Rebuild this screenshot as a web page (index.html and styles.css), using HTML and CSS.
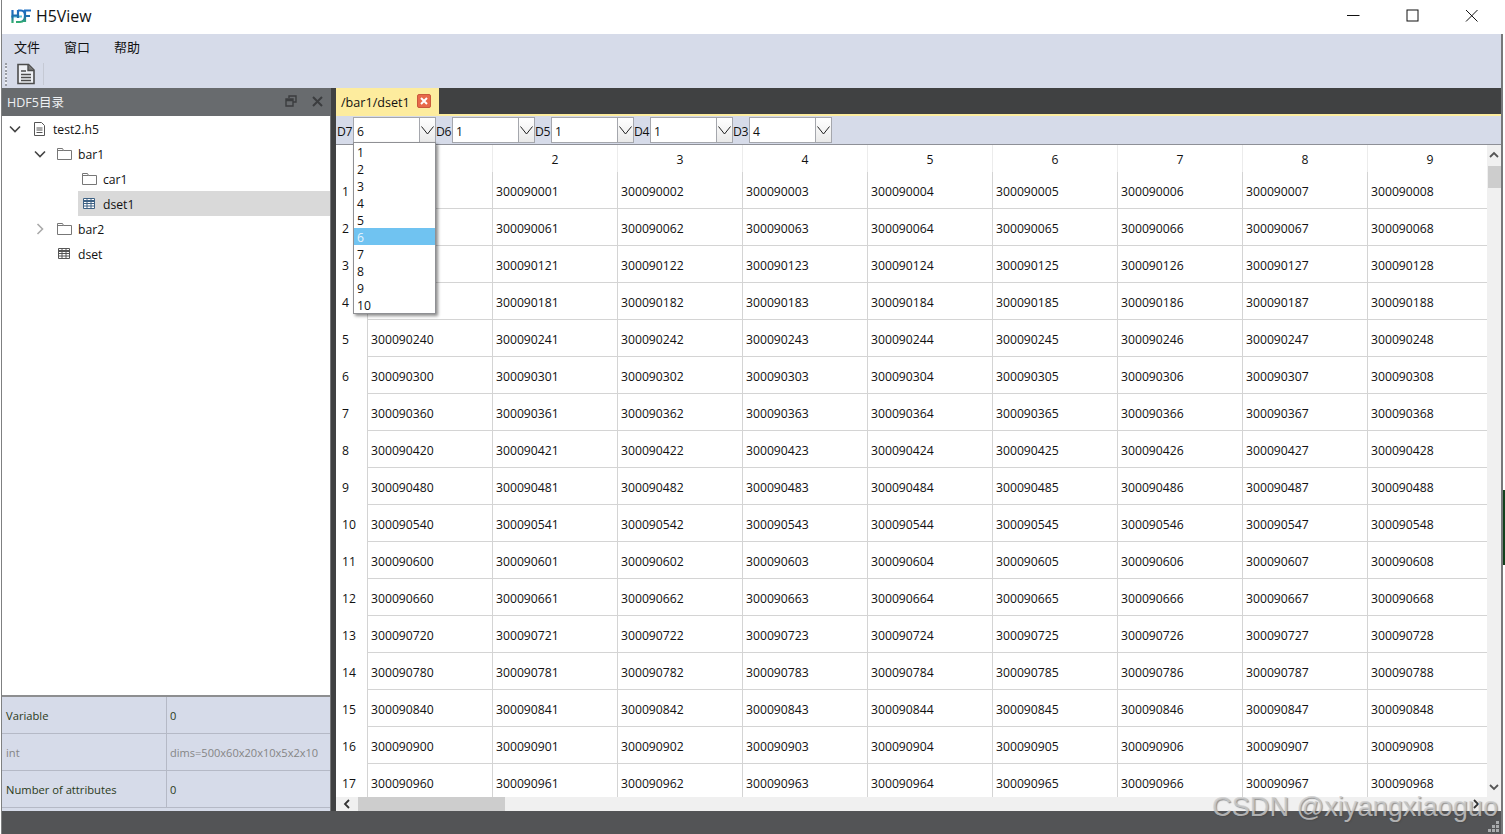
FILE: index.html
```html
<!DOCTYPE html>
<html lang="zh">
<head>
<meta charset="utf-8">
<title>H5View</title>
<link rel="stylesheet" href="styles.css">
</head>
<body>
<div class="edge-left"></div>
<div class="window">
  <header class="titlebar">
    <svg class="logo" width="21" height="15" viewBox="0 0 21 15">
      <defs><linearGradient id="logoFill" x1="0" y1="0" x2="0" y2="1"><stop offset="0" stop-color="#1c6fc4"/><stop offset=".55" stop-color="#1f6fa8"/><stop offset="1" stop-color="#35b56a"/></linearGradient></defs>
      <path d="M1 7.500h11" stroke="#57c3d8" stroke-width="2" fill="none"/>
      <path d="M2.500 1v13M8 1v8M2.500 6.500H8M8 1.500h3c3 0 4 2 4 5s-1 6.500-5 6.500H6M14 1.500h7M15 1.500V13M15 7h5" fill="none" stroke="url(#logoFill)" stroke-width="2.200"/>
    </svg>
    <span class="app-name">H5View</span>
    <div class="win-controls">
      <svg class="win-btn" width="13" height="13" viewBox="0 0 13 13"><path d="M0 6.500h12.500" stroke="#111" fill="none"/></svg>
      <svg class="win-btn" width="13" height="13" viewBox="0 0 13 13"><rect x="1" y="1" width="11" height="11" stroke="#111" fill="none"/></svg>
      <svg class="win-btn" width="13" height="13" viewBox="0 0 13 13"><path d="M1 1l11.500 11.500M12.500 1L1 12.500" stroke="#111" fill="none"/></svg>
    </div>
  </header>
  <nav class="menubar">
    <span class="menu-item">文件</span>
    <span class="menu-item">窗口</span>
    <span class="menu-item">帮助</span>
  </nav>
  <div class="toolbar">
    <span class="grip"></span>
    <svg class="tool-icon" width="20" height="22" viewBox="0 0 20 22">
      <path d="M2 1.500h10.500l5.500 5.500v13.500H2z" fill="#eef0f5" stroke="#4d4d4d" stroke-width="1.600"/>
      <path d="M12 1.500v6h6" fill="#777" stroke="#4d4d4d" stroke-width="1.400"/>
      <path d="M5 8h5M5 11.500h10M5 14.500h10M5 17.500h10" stroke="#4d4d4d" stroke-width="1.500" fill="none"/>
    </svg>
    <span class="tool-sep"></span>
  </div>
  <main class="workspace">
    <aside class="dock">
      <div class="dock-title">
        <span class="dock-name">HDF5目录</span>
        <svg class="dock-btn" width="12" height="12" viewBox="0 0 12 12"><path d="M4 3V1h7v6H8.500M1 4h7v7H1zM1 5.500h7" fill="none" stroke="#3b3d3f" stroke-width="1.400"/></svg>
        <svg class="dock-btn dock-close" width="11" height="11" viewBox="0 0 11 11"><path d="M1 1l9 9M10 1l-9 9" fill="none" stroke="#3b3d3f" stroke-width="2"/></svg>
      </div>
      <ul class="tree">
        <li class="tree-row level-0">
          <svg class="chev" width="12" height="12" viewBox="0 0 12 12"><path d="M1 3.500l5 5 5-5" fill="none" stroke="#444" stroke-width="1.600"/></svg>
          <svg class="node-icon" width="14" height="14" viewBox="0 0 14 14"><path d="M2 .5h7l3 3v10H2z" fill="#fff" stroke="#555"/><path d="M4 6h6M4 8h6M4 10.500h6" stroke="#555" fill="none"/></svg>
          <span class="node-label">test2.h5</span>
        </li>
        <li class="tree-row level-1">
          <svg class="chev" width="12" height="12" viewBox="0 0 12 12"><path d="M1 3.500l5 5 5-5" fill="none" stroke="#444" stroke-width="1.600"/></svg>
          <svg class="node-icon" width="15" height="14" viewBox="0 0 15 14"><path d="M.5 1.500h5l1 2h8v9H.500zM.5 3.500h6" fill="#fff" stroke="#777"/></svg>
          <span class="node-label">bar1</span>
        </li>
        <li class="tree-row level-2">
          <span class="chev-space"></span>
          <svg class="node-icon" width="15" height="14" viewBox="0 0 15 14"><path d="M.5 1.500h5l1 2h8v9H.500zM.5 3.500h6" fill="#fff" stroke="#777"/></svg>
          <span class="node-label">car1</span>
        </li>
        <li class="tree-row level-2 selected">
          <span class="chev-space"></span>
          <svg class="node-icon" width="13" height="11" viewBox="0 0 13 11"><path d="M.5.500h11v10H.500z" fill="#fff" stroke="#3e6285"/><path d="M.5 3h11" stroke="#3e6285" stroke-width="2"/><path d="M.5 5.500h11M.5 8h11M4 .5v10M8 .5v10" stroke="#3e6285" fill="none"/></svg>
          <span class="node-label">dset1</span>
        </li>
        <li class="tree-row level-1">
          <svg class="chev" width="12" height="12" viewBox="0 0 12 12"><path d="M3.500 1l5 5-5 5" fill="none" stroke="#aaa" stroke-width="1.600"/></svg>
          <svg class="node-icon" width="15" height="14" viewBox="0 0 15 14"><path d="M.5 1.500h5l1 2h8v9H.500zM.5 3.500h6" fill="#fff" stroke="#777"/></svg>
          <span class="node-label">bar2</span>
        </li>
        <li class="tree-row level-1">
          <span class="chev-space"></span>
          <svg class="node-icon" width="13" height="11" viewBox="0 0 13 11"><path d="M.5.500h11v10H.500z" fill="#fff" stroke="#555"/><path d="M.5 3h11" stroke="#555" stroke-width="2"/><path d="M.5 5.500h11M.5 8h11M4 .5v10M8 .5v10" stroke="#555" fill="none"/></svg>
          <span class="node-label">dset</span>
        </li>
      </ul>
      <div class="attrs-panel">
        <table class="attrs">
          <tr><td class="attr-key">Variable</td><td>0</td></tr>
          <tr class="muted"><td class="attr-key">int</td><td>dims=500x60x20x10x5x2x10</td></tr>
          <tr><td class="attr-key">Number of attributes</td><td>0</td></tr>
        </table>
      </div>
    </aside>
    <section class="content">
      <div class="tabbar">
        <div class="tab">
          <span class="tab-label">/bar1/dset1</span>
          <svg class="tab-close" width="14" height="14" viewBox="0 0 14 14"><rect x=".5" y=".5" width="13" height="13" rx="1.500" fill="#e8694a" stroke="#c9593c"/><path d="M4 4l6 6M10 4l-6 6" stroke="#fff" stroke-width="2" fill="none"/></svg>
        </div>
      </div>
      <div class="dims">
        <label class="dim">D7</label>
        <div class="combo open">
          <span class="combo-value">6</span>
          <span class="combo-arrow"><svg width="13" height="9" viewBox="0 0 13 9"><path d="M.5.500l6 7.500 6-7.500" fill="none" stroke="#222"/></svg></span>
          <ul class="popup">
            <li>1</li><li>2</li><li>3</li><li>4</li><li>5</li><li class="current">6</li><li>7</li><li>8</li><li>9</li><li>10</li>
          </ul>
        </div>
        <label class="dim">D6</label>
        <div class="combo"><span class="combo-value">1</span><span class="combo-arrow"><svg width="13" height="9" viewBox="0 0 13 9"><path d="M.5.500l6 7.500 6-7.500" fill="none" stroke="#222"/></svg></span></div>
        <label class="dim">D5</label>
        <div class="combo"><span class="combo-value">1</span><span class="combo-arrow"><svg width="13" height="9" viewBox="0 0 13 9"><path d="M.5.500l6 7.500 6-7.500" fill="none" stroke="#222"/></svg></span></div>
        <label class="dim">D4</label>
        <div class="combo"><span class="combo-value">1</span><span class="combo-arrow"><svg width="13" height="9" viewBox="0 0 13 9"><path d="M.5.500l6 7.500 6-7.500" fill="none" stroke="#222"/></svg></span></div>
        <label class="dim">D3</label>
        <div class="combo"><span class="combo-value">4</span><span class="combo-arrow"><svg width="13" height="9" viewBox="0 0 13 9"><path d="M.5.500l6 7.500 6-7.500" fill="none" stroke="#222"/></svg></span></div>
      </div>
      <div class="data-view">
        <div class="data-main">
          <div class="table-clip">
            <table class="grid">
              <thead><tr><th class="corner"></th><th>1</th><th>2</th><th>3</th><th>4</th><th>5</th><th>6</th><th>7</th><th>8</th><th>9</th></tr></thead>
              <tbody>
                <tr><th>1</th><td>300090000</td><td>300090001</td><td>300090002</td><td>300090003</td><td>300090004</td><td>300090005</td><td>300090006</td><td>300090007</td><td>300090008</td></tr>
                <tr><th>2</th><td>300090060</td><td>300090061</td><td>300090062</td><td>300090063</td><td>300090064</td><td>300090065</td><td>300090066</td><td>300090067</td><td>300090068</td></tr>
                <tr><th>3</th><td>300090120</td><td>300090121</td><td>300090122</td><td>300090123</td><td>300090124</td><td>300090125</td><td>300090126</td><td>300090127</td><td>300090128</td></tr>
                <tr><th>4</th><td>300090180</td><td>300090181</td><td>300090182</td><td>300090183</td><td>300090184</td><td>300090185</td><td>300090186</td><td>300090187</td><td>300090188</td></tr>
                <tr><th>5</th><td>300090240</td><td>300090241</td><td>300090242</td><td>300090243</td><td>300090244</td><td>300090245</td><td>300090246</td><td>300090247</td><td>300090248</td></tr>
                <tr><th>6</th><td>300090300</td><td>300090301</td><td>300090302</td><td>300090303</td><td>300090304</td><td>300090305</td><td>300090306</td><td>300090307</td><td>300090308</td></tr>
                <tr><th>7</th><td>300090360</td><td>300090361</td><td>300090362</td><td>300090363</td><td>300090364</td><td>300090365</td><td>300090366</td><td>300090367</td><td>300090368</td></tr>
                <tr><th>8</th><td>300090420</td><td>300090421</td><td>300090422</td><td>300090423</td><td>300090424</td><td>300090425</td><td>300090426</td><td>300090427</td><td>300090428</td></tr>
                <tr><th>9</th><td>300090480</td><td>300090481</td><td>300090482</td><td>300090483</td><td>300090484</td><td>300090485</td><td>300090486</td><td>300090487</td><td>300090488</td></tr>
                <tr><th>10</th><td>300090540</td><td>300090541</td><td>300090542</td><td>300090543</td><td>300090544</td><td>300090545</td><td>300090546</td><td>300090547</td><td>300090548</td></tr>
                <tr><th>11</th><td>300090600</td><td>300090601</td><td>300090602</td><td>300090603</td><td>300090604</td><td>300090605</td><td>300090606</td><td>300090607</td><td>300090608</td></tr>
                <tr><th>12</th><td>300090660</td><td>300090661</td><td>300090662</td><td>300090663</td><td>300090664</td><td>300090665</td><td>300090666</td><td>300090667</td><td>300090668</td></tr>
                <tr><th>13</th><td>300090720</td><td>300090721</td><td>300090722</td><td>300090723</td><td>300090724</td><td>300090725</td><td>300090726</td><td>300090727</td><td>300090728</td></tr>
                <tr><th>14</th><td>300090780</td><td>300090781</td><td>300090782</td><td>300090783</td><td>300090784</td><td>300090785</td><td>300090786</td><td>300090787</td><td>300090788</td></tr>
                <tr><th>15</th><td>300090840</td><td>300090841</td><td>300090842</td><td>300090843</td><td>300090844</td><td>300090845</td><td>300090846</td><td>300090847</td><td>300090848</td></tr>
                <tr><th>16</th><td>300090900</td><td>300090901</td><td>300090902</td><td>300090903</td><td>300090904</td><td>300090905</td><td>300090906</td><td>300090907</td><td>300090908</td></tr>
                <tr><th>17</th><td>300090960</td><td>300090961</td><td>300090962</td><td>300090963</td><td>300090964</td><td>300090965</td><td>300090966</td><td>300090967</td><td>300090968</td></tr>
              </tbody>
            </table>
          </div>
          <div class="hscroll">
            <svg class="scroll-arrow" width="8" height="10" viewBox="0 0 8 10"><path d="M6 1L2 5l4 4" fill="none" stroke="#333" stroke-width="1.800"/></svg>
            <span class="hthumb"></span>
            <svg class="scroll-arrow arrow-end" width="8" height="10" viewBox="0 0 8 10"><path d="M2 1l4 4-4 4" fill="none" stroke="#333" stroke-width="1.800"/></svg>
          </div>
        </div>
        <div class="vscroll">
          <svg class="vs-up" width="10" height="8" viewBox="0 0 10 8"><path d="M1 6l4-4 4 4" fill="none" stroke="#555" stroke-width="1.800"/></svg>
          <span class="vthumb"></span>
          <svg class="vs-down" width="10" height="8" viewBox="0 0 10 8"><path d="M1 2l4 4 4-4" fill="none" stroke="#555" stroke-width="1.800"/></svg>
        </div>
      </div>
    </section>
  </main>
  <footer class="statusbar">
    <svg class="size-grip" width="12" height="12" viewBox="0 0 12 12"><path d="M8 0h3v3H8zM4 4h3v3H4zM8 4h3v3H8zM0 8h3v3H0zM4 8h3v3H4zM8 8h3v3H8z" fill="#a9abad"/></svg>
  </footer>
</div>
<div class="edge-right"><span class="edge-patch"></span></div>
<div class="watermark">CSDN @xiyangxiaoguo</div>
</body>
</html>
```
FILE: styles.css
```css
* { box-sizing: border-box; }
html, body { margin: 0; height: 834px; overflow: hidden; }
body {
  display: flex;
  width: 1505px;
  position: relative;
  background: #fff;
  color: #111;
  font: 12.2px/1 "Open Sans", "Noto Sans CJK SC", sans-serif;
}
ul { list-style: none; margin: 0; padding: 0; }
table { border-collapse: separate; border-spacing: 0; }

.edge-left { width: 1px; background: #fff; flex: none; }
.edge-right { width: 2px; background: #fff; flex: none; padding-top: 490px; }
.edge-patch { display: block; height: 75px; background: #12401c; }

.window {
  width: 1502px;
  flex: none;
  display: flex;
  flex-direction: column;
  border-left: 1px solid #7f8081;
  border-right: 2px solid #77787a;
}

/* title */
.titlebar {
  height: 34px;
  flex: none;
  display: flex;
  align-items: center;
  background: #fff;
  padding: 0 0 3px 8px;
  margin-right: -2px;
}
.logo { margin: 1px 5px 0 0; }
.app-name { font: 15.9px "Open Sans", sans-serif; }
.win-controls { margin-left: auto; display: flex; padding-right: 25px; gap: 46px; }
.win-btn { display: block; }

/* menu + toolbar */
.menubar {
  height: 26px;
  flex: none;
  background: #d6dbe9;
  display: flex;
  align-items: center;
  padding: 0 0 2px 12px;
  gap: 24px;
}
.menu-item { font: 13px "Noto Sans CJK SC", sans-serif; width: 26px; white-space: nowrap; }
.toolbar {
  height: 28px;
  flex: none;
  background: #d6dbe9;
  display: flex;
  align-items: center;
  padding-left: 3px;
}
.grip {
  width: 2px;
  height: 23px;
  background: repeating-linear-gradient(to bottom, #9a9da5 0 2px, #eef0f5 2px 3.500px);
}
.tool-icon { margin-left: 9px; }
.tool-sep { width: 1px; height: 22px; background: #c5c9d4; margin-left: 7px; }

/* workspace */
.workspace { flex: 1; min-height: 0; display: flex; background: #404142; }
.dock {
  width: 329px;
  flex: none;
  display: flex;
  flex-direction: column;
  background: #fff;
  border-right: 1px solid #77787a;
}
.dock-title {
  height: 28px;
  flex: none;
  background: #686b6e;
  color: #eef0f2;
  display: flex;
  align-items: center;
  padding: 0 0 2px 5px;
  margin-right: -1px;
  font: 12.5px "Open Sans", "Noto Sans CJK SC", sans-serif;
}
.dock-name { flex: 1; }
.dock-btn { margin-right: 15px; }
.dock-close { margin-right: 8px; }

.tree { flex: 1; min-height: 0; }
.tree-row { height: 25px; display: flex; align-items: center; }
.node-label { white-space: nowrap; padding-top: 3px; }
.chev, .chev-space { width: 12px; height: 12px; flex: none; margin-right: 11px; }
.node-icon { flex: none; margin-right: 6px; width: 15px; }
.level-0 { padding-left: 7px; }
.level-1 { padding-left: 32px; }
.level-2 { padding-left: 57px; }
.selected { margin-left: 76px; padding-left: 4px; background: #d9d9d9; }
.selected .chev-space { display: none; }

.attrs-panel {
  height: 116px;
  flex: none;
  background: #d6dbe9;
  border-top: 2px solid #8d8e90;
}
.attrs { width: 328px; table-layout: fixed; color: #2a3a20; }
.attrs td { height: 37px; padding: 2px 3px 0; border-bottom: 1px solid #b5b9c6; white-space: nowrap; font-size: 11.05px; }
.attrs .attr-key { width: 165px; padding-left: 4px; font-size: 11.2px; border-right: 1px solid #b5b9c6; }
.attrs .muted td { color: #858585; }

/* right side */
.content {
  width: 1165px;
  margin-left: 5px;
  flex: none;
  display: flex;
  flex-direction: column;
  min-width: 0;
}
.tabbar { height: 28px; flex: none; border-bottom: 2px solid #fdec9e; background: #404142; display: flex; }
.tab {
  width: 103px;
  height: 26px;
  background: #fdec9e;
  display: flex;
  align-items: center;
  padding-left: 5px;
  gap: 7px;
  font-size: 12.6px;
}
.tab-label { padding-top: 5px; }
.dims {
  height: 29px;
  flex: none;
  background: #d6dbe9;
  border-bottom: 1px solid #8e9097;
  display: flex;
  padding: 1px 0 0 1px;
}
.dim { width: 16px; flex: none; padding-top: 9px; letter-spacing: -.3px; white-space: nowrap; }
.combo {
  width: 83px;
  height: 26px;
  flex: none;
  position: relative;
  display: flex;
  background: #fff;
  border: 1px solid #a5a7ad;
}
.combo-value { flex: 1; padding: 8px 0 0 3px; }
.combo-arrow {
  width: 16px;
  flex: none;
  border-left: 1px solid #a5a7ad;
  background: linear-gradient(#fff, #e9e9e9);
  display: flex;
  align-items: center;
  justify-content: center;
}
.popup {
  position: absolute;
  left: -1px;
  top: 24px;
  width: 83px;
  height: 172px;
  background: #fff;
  border: 1px solid #8f9094;
  box-shadow: 2px 2px 3px rgba(0, 0, 0, .45);
  z-index: 5;
}
.popup li { height: 17px; padding: 4px 0 0 3px; }
.popup .current { background: #70c3f1; color: #e7f4fc; }

.data-view { flex: 1; min-height: 0; display: flex; background: #fff; }
.data-main { width: 1151px; flex: none; display: flex; flex-direction: column; min-height: 0; }
.table-clip { flex: 1; overflow: hidden; min-height: 0; }
.grid { table-layout: fixed; width: 1156px; }
.grid th, .grid td { font-weight: 400; padding: 0; white-space: nowrap; }
.grid thead th { height: 27px; width: 125px; text-align: center; padding-top: 3px; border-left: 1px solid #ececec; }
.grid thead .corner { width: 31px; border-left: 0; }
.grid tbody th { height: 37px; text-align: left; padding: 4px 0 0 6px; }
.grid tbody td { height: 37px; padding: 4px 0 0 3px; border-left: 1px solid #d4d4d4; border-bottom: 1px solid #d4d4d4; }

.hscroll {
  height: 14px;
  flex: none;
  display: flex;
  align-items: center;
  background: #f0f0f0;
}
.scroll-arrow { margin-left: 7px; flex: none; }
.hthumb { width: 147px; height: 14px; background: #cdcdcd; margin-left: 7px; }
.arrow-end { margin-left: auto; margin-right: 7px; }

.vscroll {
  width: 14px;
  flex: none;
  background: #f0f0f0;
  display: flex;
  flex-direction: column;
  align-items: center;
  padding: 6px 0 20px;
}
.vthumb { width: 13px; height: 22px; background: #cdcdcd; margin-top: 7px; }
.vs-down { margin-top: auto; }

/* status */
.statusbar {
  height: 23px;
  flex: none;
  background: #535456;
  display: flex;
  justify-content: flex-end;
  align-items: flex-end;
  padding: 0 1px 1px 0;
}

.watermark {
  position: absolute;
  left: 1212px;
  top: 792px;
  font: 27.2px/30px "Liberation Sans", sans-serif;
  white-space: nowrap;
  color: rgba(205, 205, 205, .8);
  text-shadow: 1px 1px 1px rgba(70, 70, 70, .55);
}
```
